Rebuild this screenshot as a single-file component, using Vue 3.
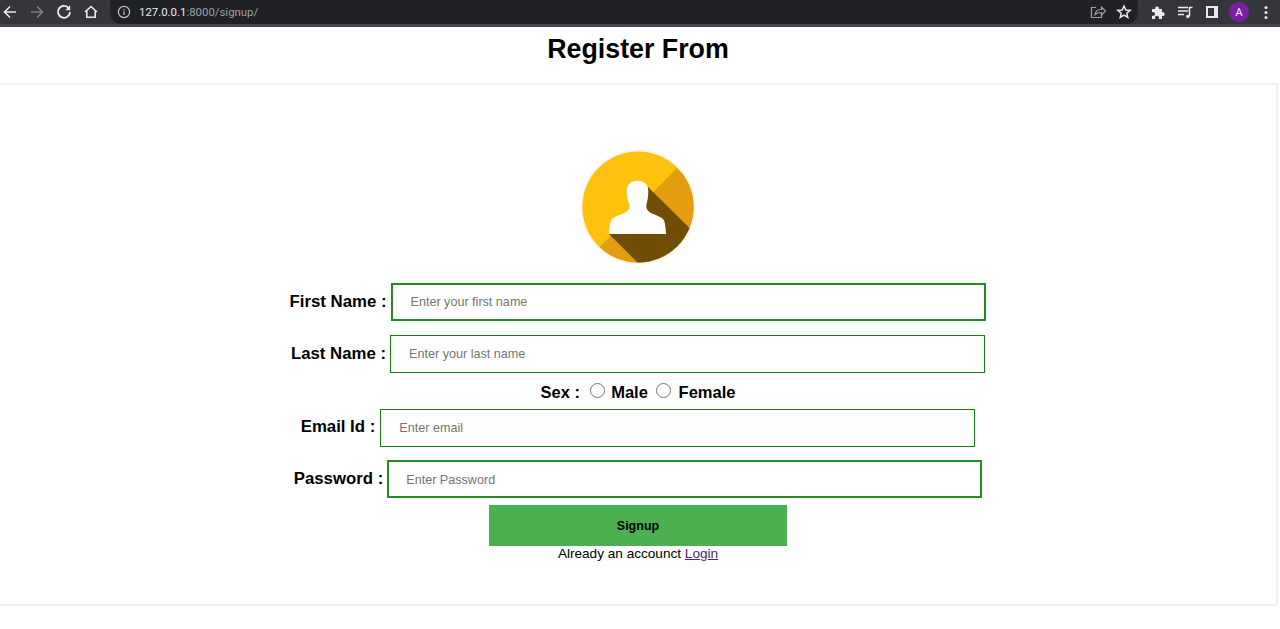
<template>
	<div class="page">
		<div class="toolbar">
			<div class="nav-icons">
				<svg class="icon" viewBox="0 0 20 20" fill="none" stroke="#e8eaed" stroke-width="1.6">
					<path d="M16 10H5M10 4.500L4.500 10l5.500 5.500" />
				</svg>
				<svg class="icon" viewBox="0 0 20 20" fill="none" stroke="#7d7f83" stroke-width="1.6">
					<path d="M4 10h11M10 4.500l5.500 5.500-5.500 5.500" />
				</svg>
				<svg class="icon" viewBox="0 0 20 20" fill="none" stroke="#e8eaed" stroke-width="1.9">
					<path d="M15 6.500A6 6 0 1 0 16 10" />
					<path d="M16.200 3.200v5h-5z" fill="#e8eaed" stroke="none" />
				</svg>
				<svg class="icon" viewBox="0 0 20 20" fill="none" stroke="#e8eaed" stroke-width="1.6">
					<path d="M4 10l6-5.500 6 5.500M5.800 9v6.200h8.400V9" />
				</svg>
			</div>
			<div class="address-bar">
				<svg class="info-icon" viewBox="0 0 16 16" fill="none" stroke="#bdc1c6" stroke-width="1.200">
					<circle cx="8" cy="8" r="5.600" />
					<path d="M8 7.300v3.700M8 5v1.300" />
				</svg>
				<span class="url"><span class="host">127.0.0.1</span>:8000/signup/</span>
				<svg class="icon" viewBox="0 0 20 20" fill="none" stroke="#9aa0a6" stroke-width="1.200">
					<path d="M9 5.500H4.500v10h10V12" />
					<path d="M8 12.500c.5-3.500 3-5 6.500-5V5l4 4-4 4v-2.500c-2.500 0-5 .5-6.500 2z" />
				</svg>
				<svg class="icon" viewBox="0 0 20 20" fill="none" stroke="#e8eaed" stroke-width="1.500">
					<path d="M10 4l1.800 4 4.300.4-3.300 2.800 1 4.300-3.800-2.300-3.800 2.300 1-4.300-3.300-2.800 4.300-.4z" />
				</svg>
			</div>
			<div class="extension-icons">
				<svg class="icon" viewBox="0 0 20 20" fill="#e8eaed">
					<path d="M4 7h3.200a2 2 0 1 1 3.800 0H14v3.200a2 2 0 1 1 0 3.800V17h-3.400a2 2 0 1 0-3.200 0H4v-3.300a2 2 0 1 0 0-3.400z" />
				</svg>
				<svg class="icon" viewBox="0 0 20 20" fill="none" stroke="#e8eaed" stroke-width="1.500">
					<path d="M3 5.500h10M3 9h10M3 12.500h6M14.500 14.500V5.500h3" />
					<circle cx="12.800" cy="14.500" r="1.700" fill="#e8eaed" stroke="none" />
				</svg>
				<svg class="icon" viewBox="0 0 20 20">
					<path fill="#e8eaed" fill-rule="evenodd" d="M4 4h12v12H4zM6 6v8h6V6z" />
				</svg>
				<div class="profile">A</div>
				<svg class="icon" viewBox="0 0 20 20" fill="#e8eaed">
					<circle cx="10" cy="5.500" r="1.500" />
					<circle cx="10" cy="10.500" r="1.500" />
					<circle cx="10" cy="15.500" r="1.500" />
				</svg>
			</div>
		</div>

		<h1 class="title">Register From</h1>

		<form class="register-form" @submit.prevent>
			<svg class="avatar" viewBox="0 0 116 116">
				<defs>
					<clipPath id="avatar-clip">
						<circle cx="58" cy="58" r="55.600" />
					</clipPath>
				</defs>
				<circle cx="58" cy="58" r="57.500" fill="#f5f3ee" />
				<g clip-path="url(#avatar-clip)">
					<rect width="116" height="116" fill="#fec10d" />
					<polygon points="96.700,19.300 140,62 60,140 10,108" fill="#e29e10" />
					<polygon points="68,38 125,94.300 70,126 29,85" fill="#6f4d05" />
				</g>
				<path
					fill="#fff"
					d="M57.700 31.700C51 31.700 46.700 35.700 46.700 42C46.700 47 47.500 52 49.500 55C50 58 49.500 61 46 63C42 65.500 35 67 32 70C30 72 29.300 78 29 85H86C85.700 78 85 72 83 70C80 67 73 65.500 69.500 63C66.500 61 66 58 66.500 55C67.500 52 68.300 47 68.300 42C68.300 35.700 64.400 31.700 57.700 31.700z"
				/>
			</svg>

			<div class="field first-field">
				<label>First Name :</label>
				<input class="thick" type="text" placeholder="Enter your first name" />
			</div>
			<div class="field">
				<label>Last Name :</label>
				<input type="text" placeholder="Enter your last name" />
			</div>
			<div class="sex-row">
				Sex :
				<input type="radio" name="sex" />
				Male
				<input class="female" type="radio" name="sex" />
				Female
			</div>
			<div class="field email-field">
				<label>Email Id :</label>
				<input type="text" placeholder="Enter email" />
			</div>
			<div class="field">
				<label>Password :</label>
				<input class="thick password" type="password" placeholder="Enter Password" />
			</div>
			<button class="signup-button" type="submit">Signup</button>
			<p class="login-text">Already an accounct <a href="#">Login</a></p>
		</form>
	</div>
</template>

<script setup>
</script>

<style>
html,
body {
	background: #fff;
	overflow: hidden;
}
</style>

<style scoped>
.page {
	width: 1280px;
	height: 629px;
	font-family: "Liberation Sans", Arial, sans-serif;
	color: #000;
	overflow: hidden;
}

.toolbar {
	display: flex;
	align-items: flex-start;
	height: 24px;
	background-color: #35363a;
	border-bottom: 3px solid #46474b;
}

.nav-icons,
.extension-icons {
	display: flex;
	align-items: center;
	gap: 7px;
	height: 24px;
}

.extension-icons {
	padding-right: 4px;
}

.icon {
	display: block;
	width: 20px;
	height: 20px;
	flex: none;
}

.address-bar {
	flex: 1;
	display: flex;
	align-items: center;
	gap: 7px;
	height: 24px;
	margin: 0 10px 0 9px;
	padding: 0 4px 0 6px;
	background-color: #202124;
	border-radius: 0 0 12px 12px;
}

.info-icon {
	width: 16px;
	height: 16px;
	flex: none;
}

.url {
	flex: 1;
	font-family: Roboto, sans-serif;
	font-size: 11.400px;
	color: #9aa0a6;
}

.host {
	color: #e8eaed;
}

.profile {
	width: 20px;
	height: 20px;
	border-radius: 50%;
	background-color: #7b1fa2;
	color: #f0e6f5;
	font-family: "Noto Sans", sans-serif;
	font-size: 11px;
	line-height: 20px;
	text-align: center;
}

.title {
	width: 1276px;
	margin: 0;
	height: 56px;
	font-size: 26.800px;
	font-weight: 700;
	line-height: 44px;
	text-align: center;
}

.register-form {
	box-sizing: border-box;
	width: 1278px;
	height: 523px;
	padding-top: 64px;
	border-top: 2px solid #f1f1f1;
	border-right: 2px solid #f1f1f1;
	border-bottom: 2px solid #f1f1f1;
	display: flex;
	flex-direction: column;
	align-items: center;
}

.avatar {
	display: block;
	width: 116px;
	height: 116px;
	margin-bottom: 18px;
}

.field {
	display: flex;
	align-items: center;
	justify-content: center;
	gap: 4px;
	margin-bottom: 14px;
}

.first-field,
.email-field {
	gap: 5px;
}

.email-field {
	margin-bottom: 13px;
}

.field label {
	font-size: 16.800px;
	font-weight: 700;
}

.email-field label {
	margin-top: -2px;
}

.field input {
	box-sizing: border-box;
	width: 595px;
	height: 38px;
	padding: 0 18px;
	border: 1px solid #128012;
	border-radius: 0;
	outline: none;
	font-family: "Liberation Sans", Arial, sans-serif;
	font-size: 12.600px;
}

.field input.thick {
	border: 2px solid #268a26;
	padding: 0 17px;
}

.field input.password {
	padding-top: 2px;
}

.field input::placeholder {
	color: #757575;
}

.sex-row {
	margin: -7px 0 7px;
	height: 22px;
	line-height: 22px;
	font-size: 16.500px;
	font-weight: 700;
	text-align: center;
}

.sex-row input {
	width: 15px;
	height: 15px;
	margin: 3px 2px 0 5px;
}

.sex-row input.female {
	margin: 3px 2.500px 0 4px;
}

.signup-button {
	width: 298px;
	height: 41px;
	margin-top: -7px;
	border: none;
	background-color: #4caf50;
	color: #000;
	font-family: "Liberation Sans", Arial, sans-serif;
	font-size: 12.500px;
	font-weight: 700;
}

.login-text {
	margin: 0;
	font-size: 13.600px;
	line-height: 15px;
}

.login-text a {
	color: #551a8b;
}
</style>
